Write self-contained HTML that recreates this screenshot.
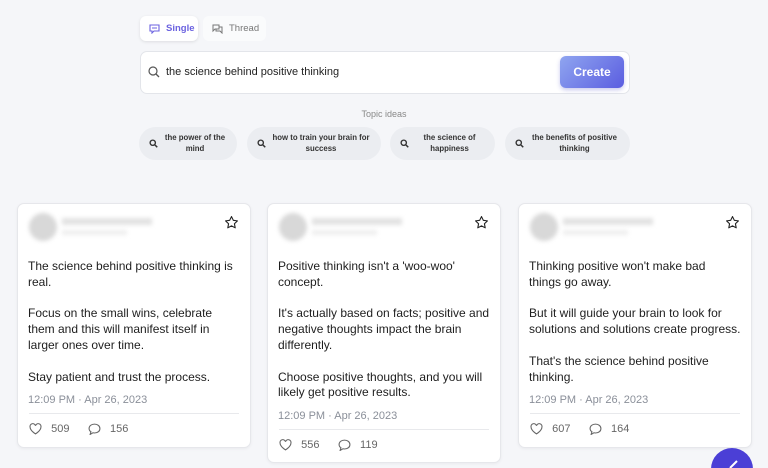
<!DOCTYPE html>
<html><head><style>
*{box-sizing:border-box;margin:0;padding:0}
html,body{width:768px;height:468px;overflow:hidden}
body{background:#f5f6f9;font-family:"Liberation Sans",sans-serif;position:relative;color:#222}
.abs{position:absolute}
.tab{position:absolute;top:16px;height:25px;border-radius:6px;font-size:9.5px;display:flex;align-items:center;gap:6px;padding-left:9px}
.search{left:140px;top:51px;width:490px;height:43px;background:#fff;border:1px solid #e3e5ea;border-radius:7px}
.btn{left:560px;top:56px;width:64px;height:32px;border-radius:6px;background:linear-gradient(135deg,#8fa5f0,#5b5de0);color:#fff;font-size:12px;font-weight:bold;display:flex;align-items:center;justify-content:center;box-shadow:0 2px 4px rgba(80,80,200,.3)}
.chip{position:absolute;top:127px;height:33px;border-radius:17px;background:#ebedf1;font-size:7.8px;font-weight:bold;color:#333;text-align:center;line-height:10.5px;display:flex;align-items:center}
.chip svg{position:absolute;left:10px;top:12px}
.chip span{display:block;width:100%;padding-left:14px}
.card{position:absolute;top:203px;width:234px;background:#fff;border:1px solid #e6e7eb;border-radius:7px;box-shadow:0 1px 3px rgba(0,0,0,.05)}
.av{position:absolute;left:11px;top:9px;width:28px;height:28px;border-radius:50%;background:#d8d8d8;filter:blur(2px)}
.n1{position:absolute;left:44px;top:14px;width:90px;height:7px;background:#e2e2e2;filter:blur(2px)}
.n2{position:absolute;left:44px;top:26px;width:65px;height:5px;background:#eee;filter:blur(2px)}
.star{position:absolute;right:11px;top:11px}
.txt{position:absolute;left:10px;top:55px;font-size:12px;line-height:15.8px;color:#1e1e1e;white-space:nowrap}
.date{position:absolute;left:10px;font-size:11px;color:#8a8f99}
.hr{position:absolute;left:11px;right:11px;height:1px;background:#e8e9ec}
.st{position:absolute;left:11px;font-size:11px;color:#666;display:flex;align-items:center}
</style></head><body>
<div class="tab" style="left:140px;width:58px;background:#fff;box-shadow:0 1px 3px rgba(0,0,0,.1);color:#6b62e0;font-weight:bold">
<svg width="11" height="10" viewBox="0 0 11 10"><path d="M1 1h9v6H5l-2 2V7H1z" fill="none" stroke="#6b62e0" stroke-width="1.1"/><path d="M3 4h5" stroke="#6b62e0"/></svg>Single</div>
<div class="tab" style="left:203px;width:63px;background:#fafbfc;color:#777">
<svg width="11" height="10" viewBox="0 0 11 10"><path d="M1 1h6v4H3L1 7z M4 5v2h4l2 2V3H7" fill="none" stroke="#777" stroke-width="1"/></svg>Thread</div>
<div class="abs search"></div>
<svg class="abs" style="left:148px;top:66px" width="12" height="12" viewBox="0 0 12 12"><circle cx="5" cy="5" r="4" fill="none" stroke="#555" stroke-width="1.2"/><path d="M8 8l3 3" stroke="#555" stroke-width="1.3"/></svg>
<div class="abs" style="left:166px;top:66px;font-size:11px;color:#222">the science behind positive thinking</div>
<div class="abs btn">Create</div>
<div class="abs" style="left:0;width:768px;top:109px;text-align:center;font-size:9px;color:#888">Topic ideas</div>
<div class="chip" style="left:139px;width:98px"><svg width="9" height="9" viewBox="0 0 12 12"><circle cx="5" cy="5" r="3.5" fill="none" stroke="#333" stroke-width="1.8"/><path d="M8 8l3 3" stroke="#333" stroke-width="2"/></svg><span>the power of the<br>mind</span></div>
<div class="chip" style="left:247px;width:134px"><svg width="9" height="9" viewBox="0 0 12 12"><circle cx="5" cy="5" r="3.5" fill="none" stroke="#333" stroke-width="1.8"/><path d="M8 8l3 3" stroke="#333" stroke-width="2"/></svg><span>how to train your brain for<br>success</span></div>
<div class="chip" style="left:390px;width:105px"><svg width="9" height="9" viewBox="0 0 12 12"><circle cx="5" cy="5" r="3.5" fill="none" stroke="#333" stroke-width="1.8"/><path d="M8 8l3 3" stroke="#333" stroke-width="2"/></svg><span>the science of<br>happiness</span></div>
<div class="chip" style="left:505px;width:125px"><svg width="9" height="9" viewBox="0 0 12 12"><circle cx="5" cy="5" r="3.5" fill="none" stroke="#333" stroke-width="1.8"/><path d="M8 8l3 3" stroke="#333" stroke-width="2"/></svg><span>the benefits of positive<br>thinking</span></div>

<div class="card" style="left:17px;height:245px">
<div class="av"></div><div class="n1"></div><div class="n2"></div>
<svg class="star" width="15" height="15" viewBox="0 0 24 24"><path d="M12 2.5l2.9 6 6.6.9-4.8 4.6 1.2 6.5L12 17.4l-5.9 3.1 1.2-6.5L2.5 9.4l6.6-.9z" fill="none" stroke="#222" stroke-width="1.8" stroke-linejoin="round"/></svg>
<div class="txt">The science behind positive thinking is<br>real.<br><br>Focus on the small wins, celebrate<br>them and this will manifest itself in<br>larger ones over time.<br><br>Stay patient and trust the process.</div>
<div class="date" style="top:190px">12:09 PM · Apr 26, 2023</div>
<div class="hr" style="top:209px"></div>
<div class="st" style="top:219px"><svg width="13" height="12" viewBox="0 0 24 22"><path d="M12 20S2 14 2 7.5A5 5 0 0 1 12 5a5 5 0 0 1 10 2.5C22 14 12 20 12 20z" fill="none" stroke="#666" stroke-width="2"/></svg>&nbsp;&nbsp;&nbsp;509&nbsp;&nbsp;&nbsp;&nbsp;&nbsp;&nbsp;<svg width="13" height="12" viewBox="0 0 24 22"><path d="M12 2C6 2 2 5.5 2 10c0 2.5 1.3 4.6 3.4 6L4 21l5-3c1 .3 2 .4 3 .4 6 0 10-3.6 10-8.2S18 2 12 2z" fill="none" stroke="#666" stroke-width="2"/></svg>&nbsp;&nbsp;&nbsp;156</div>
</div>

<div class="card" style="left:267px;height:260px">
<div class="av"></div><div class="n1"></div><div class="n2"></div>
<svg class="star" width="15" height="15" viewBox="0 0 24 24"><path d="M12 2.5l2.9 6 6.6.9-4.8 4.6 1.2 6.5L12 17.4l-5.9 3.1 1.2-6.5L2.5 9.4l6.6-.9z" fill="none" stroke="#222" stroke-width="1.8" stroke-linejoin="round"/></svg>
<div class="txt">Positive thinking isn't a 'woo-woo'<br>concept.<br><br>It's actually based on facts; positive and<br>negative thoughts impact the brain<br>differently.<br><br>Choose positive thoughts, and you will<br>likely get positive results.</div>
<div class="date" style="top:206px">12:09 PM · Apr 26, 2023</div>
<div class="hr" style="top:225px"></div>
<div class="st" style="top:235px"><svg width="13" height="12" viewBox="0 0 24 22"><path d="M12 20S2 14 2 7.5A5 5 0 0 1 12 5a5 5 0 0 1 10 2.5C22 14 12 20 12 20z" fill="none" stroke="#666" stroke-width="2"/></svg>&nbsp;&nbsp;&nbsp;556&nbsp;&nbsp;&nbsp;&nbsp;&nbsp;&nbsp;<svg width="13" height="12" viewBox="0 0 24 22"><path d="M12 2C6 2 2 5.5 2 10c0 2.5 1.3 4.6 3.4 6L4 21l5-3c1 .3 2 .4 3 .4 6 0 10-3.6 10-8.2S18 2 12 2z" fill="none" stroke="#666" stroke-width="2"/></svg>&nbsp;&nbsp;&nbsp;119</div>
</div>

<div class="card" style="left:518px;height:245px">
<div class="av"></div><div class="n1"></div><div class="n2"></div>
<svg class="star" width="15" height="15" viewBox="0 0 24 24"><path d="M12 2.5l2.9 6 6.6.9-4.8 4.6 1.2 6.5L12 17.4l-5.9 3.1 1.2-6.5L2.5 9.4l6.6-.9z" fill="none" stroke="#222" stroke-width="1.8" stroke-linejoin="round"/></svg>
<div class="txt">Thinking positive won't make bad<br>things go away.<br><br>But it will guide your brain to look for<br>solutions and solutions create progress.<br><br>That's the science behind positive<br>thinking.</div>
<div class="date" style="top:190px">12:09 PM · Apr 26, 2023</div>
<div class="hr" style="top:209px"></div>
<div class="st" style="top:219px"><svg width="13" height="12" viewBox="0 0 24 22"><path d="M12 20S2 14 2 7.5A5 5 0 0 1 12 5a5 5 0 0 1 10 2.5C22 14 12 20 12 20z" fill="none" stroke="#666" stroke-width="2"/></svg>&nbsp;&nbsp;&nbsp;607&nbsp;&nbsp;&nbsp;&nbsp;&nbsp;&nbsp;<svg width="13" height="12" viewBox="0 0 24 22"><path d="M12 2C6 2 2 5.5 2 10c0 2.5 1.3 4.6 3.4 6L4 21l5-3c1 .3 2 .4 3 .4 6 0 10-3.6 10-8.2S18 2 12 2z" fill="none" stroke="#666" stroke-width="2"/></svg>&nbsp;&nbsp;&nbsp;164</div>
</div>

<div class="abs" style="left:711px;top:448px;width:42px;height:42px;border-radius:50%;background:#4b3fd6"></div>
<svg class="abs" style="left:728px;top:459px" width="12" height="9" viewBox="0 0 12 9"><path d="M2 9l7-7" stroke="#fff" stroke-width="2"/></svg>
</body></html>
